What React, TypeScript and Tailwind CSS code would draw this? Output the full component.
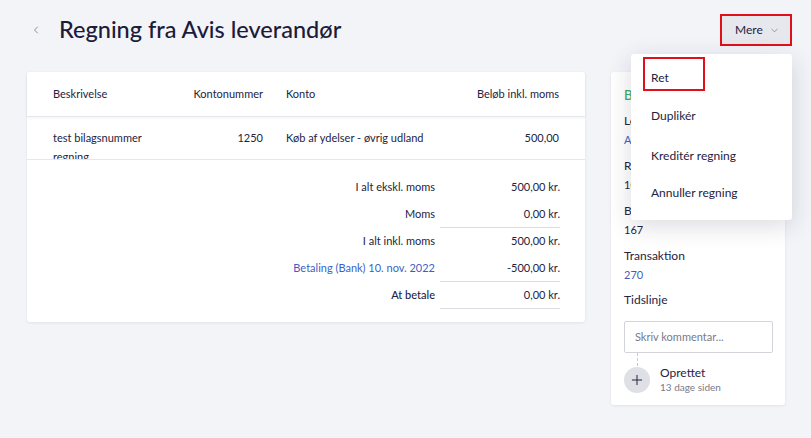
import React from "react";
import { ChevronLeft, ChevronDown, Plus } from "lucide-react";

const totals = [
  { label: "I alt ekskl. moms", value: "500,00 kr.", line: false },
  { label: "Moms", value: "0,00 kr.", line: true },
  { label: "I alt inkl. moms", value: "500,00 kr.", line: false },
  { label: "Betaling (Bank) 10. nov. 2022", value: "-500,00 kr.", line: true, link: true },
  { label: "At betale", value: "0,00 kr.", line: true, bold: true },
];

const details = [
  { label: "Leverandør", value: "Avis leverandør", link: true },
  { label: "Regningsdato", value: "10. nov. 2022" },
  { label: "Bilagsnummer", value: "167" },
  { label: "Transaktion", value: "270", link: true },
];

const menu = ["Ret", "Duplikér", "Kreditér regning", "Annuller regning"];

export default function App() {
  return (
    <div className="w-[811px] h-[438px] bg-[#f3f4f8] text-[#24233f] font-['Lato','Liberation_Sans',sans-serif] relative overflow-hidden">
      {/* Header */}
      <div className="flex items-center h-[60px] pl-[30px] pr-[19px]">
        <ChevronLeft size={12} strokeWidth={1.5} className="text-[#6b6b80]" />
        <h1 className="ml-[17px] text-[23.5px] font-medium leading-none text-[#1c1c3a]">Regning fra Avis leverandør</h1>
        <div className="ml-auto relative">
          <button className="flex items-center gap-[6px] w-[72px] h-[32px] pl-[13px] border-2 border-[#e0101a] bg-[#e7e8ed] text-[12px]">
            Mere
            <ChevronDown size={11} strokeWidth={1.5} className="text-[#777788]" />
          </button>
          {/* Dropdown */}
          <div className="absolute z-10 right-0 top-[40px] w-[161px] bg-white rounded-[3px] shadow-[0_6px_24px_rgba(30,30,60,0.16)] pt-[5px] pb-[8px]">
            <div className="absolute left-[12px] top-[3px] w-[62px] h-[34px] border-2 border-[#e0101a]" />
            {menu.map((m, i) => (
              <div key={m} className={`flex items-center pl-[20px] text-[12px] ${i === 2 ? "h-[39px] pt-[2px]" : "h-[38px]"}`}>{m}</div>
            ))}
          </div>
        </div>
      </div>

      {/* Body */}
      <div className="flex items-start gap-[26px] pl-[27px] pt-[12px]">
        {/* Table card */}
        <div className="w-[558px] bg-white rounded-[3px] shadow-[0_1px_3px_rgba(30,30,60,0.08)] pb-[13px]">
          <div className="grid grid-cols-[130px_80px_1fr_120px] px-[26px] h-[45px] items-center text-[11px] border-b border-[#e6e7ec] shadow-[0_1px_3px_rgba(30,30,60,0.06)]">
            <div>Beskrivelse</div>
            <div className="text-right">Kontonummer</div>
            <div className="pl-[23px]">Konto</div>
            <div className="text-right">Beløb inkl. moms</div>
          </div>
          <div className="grid grid-cols-[130px_80px_1fr_120px] px-[26px] h-[43px] overflow-hidden text-[11px] leading-[19px] pt-[11px] border-b border-[#e6e7ec]">
            <div className="pr-[30px]">test bilagsnummer regning</div>
            <div className="text-right">1250</div>
            <div className="pl-[23px]">Køb af ydelser - øvrig udland</div>
            <div className="text-right">500,00</div>
          </div>
          <div className="mt-[14px] flex flex-col items-end pr-[25px] text-[11px]">
            {totals.map((t) => (
              <div key={t.label} className="flex h-[27px]">
                <div className={`flex items-center pr-[5px] ${t.link ? "text-[#3d5fc4]" : ""} ${t.bold ? "font-medium" : ""}`}>{t.label}</div>
                <div className={`w-[120px] flex items-center justify-end ${t.line ? "border-b border-[#dcdde3]" : ""}`}>{t.value}</div>
              </div>
            ))}
          </div>
        </div>

        {/* Sidebar */}
        <div className="w-[174px] bg-white rounded-[3px] shadow-[0_1px_3px_rgba(30,30,60,0.08)] px-[13px] pt-[15px] pb-[11px]">
          <div className="text-[13px] text-[#3bab6a] font-medium leading-[16px]">Betalt</div>
          <div className="mt-[8px] flex flex-col gap-[7px]">
            {details.map((d) => (
              <div key={d.label} className="flex flex-col">
                <div className="text-[12px] leading-[20px]">{d.label}</div>
                <div className={`text-[11px] leading-[18px] ${d.link ? "text-[#3d5fc4]" : ""}`}>{d.value}</div>
              </div>
            ))}
          </div>
          <div className="mt-[8px] text-[12px] leading-[16px]">Tidslinje</div>
          <div className="mt-[13px] w-[149px] h-[32px] border border-[#d3d4da] rounded-[2px] flex items-center pl-[10px] text-[11px] text-[#7a7a8a]">
            Skriv kommentar...
          </div>
          <div className="ml-[13px] h-[13px] border-l border-dashed border-[#c8c9cf]" />
          <div className="flex items-center gap-[10px]">
            <div className="w-[26px] h-[26px] rounded-full bg-[#dfe0e5] flex items-center justify-center">
              <Plus size={16} strokeWidth={1.5} className="text-[#24233f]" />
            </div>
            <div className="flex flex-col">
              <div className="text-[12px] leading-[14px]">Oprettet</div>
              <div className="text-[10px] leading-[14px] text-[#7a7a8a]">13 dage siden</div>
            </div>
          </div>
        </div>
      </div>
    </div>
  );
}
